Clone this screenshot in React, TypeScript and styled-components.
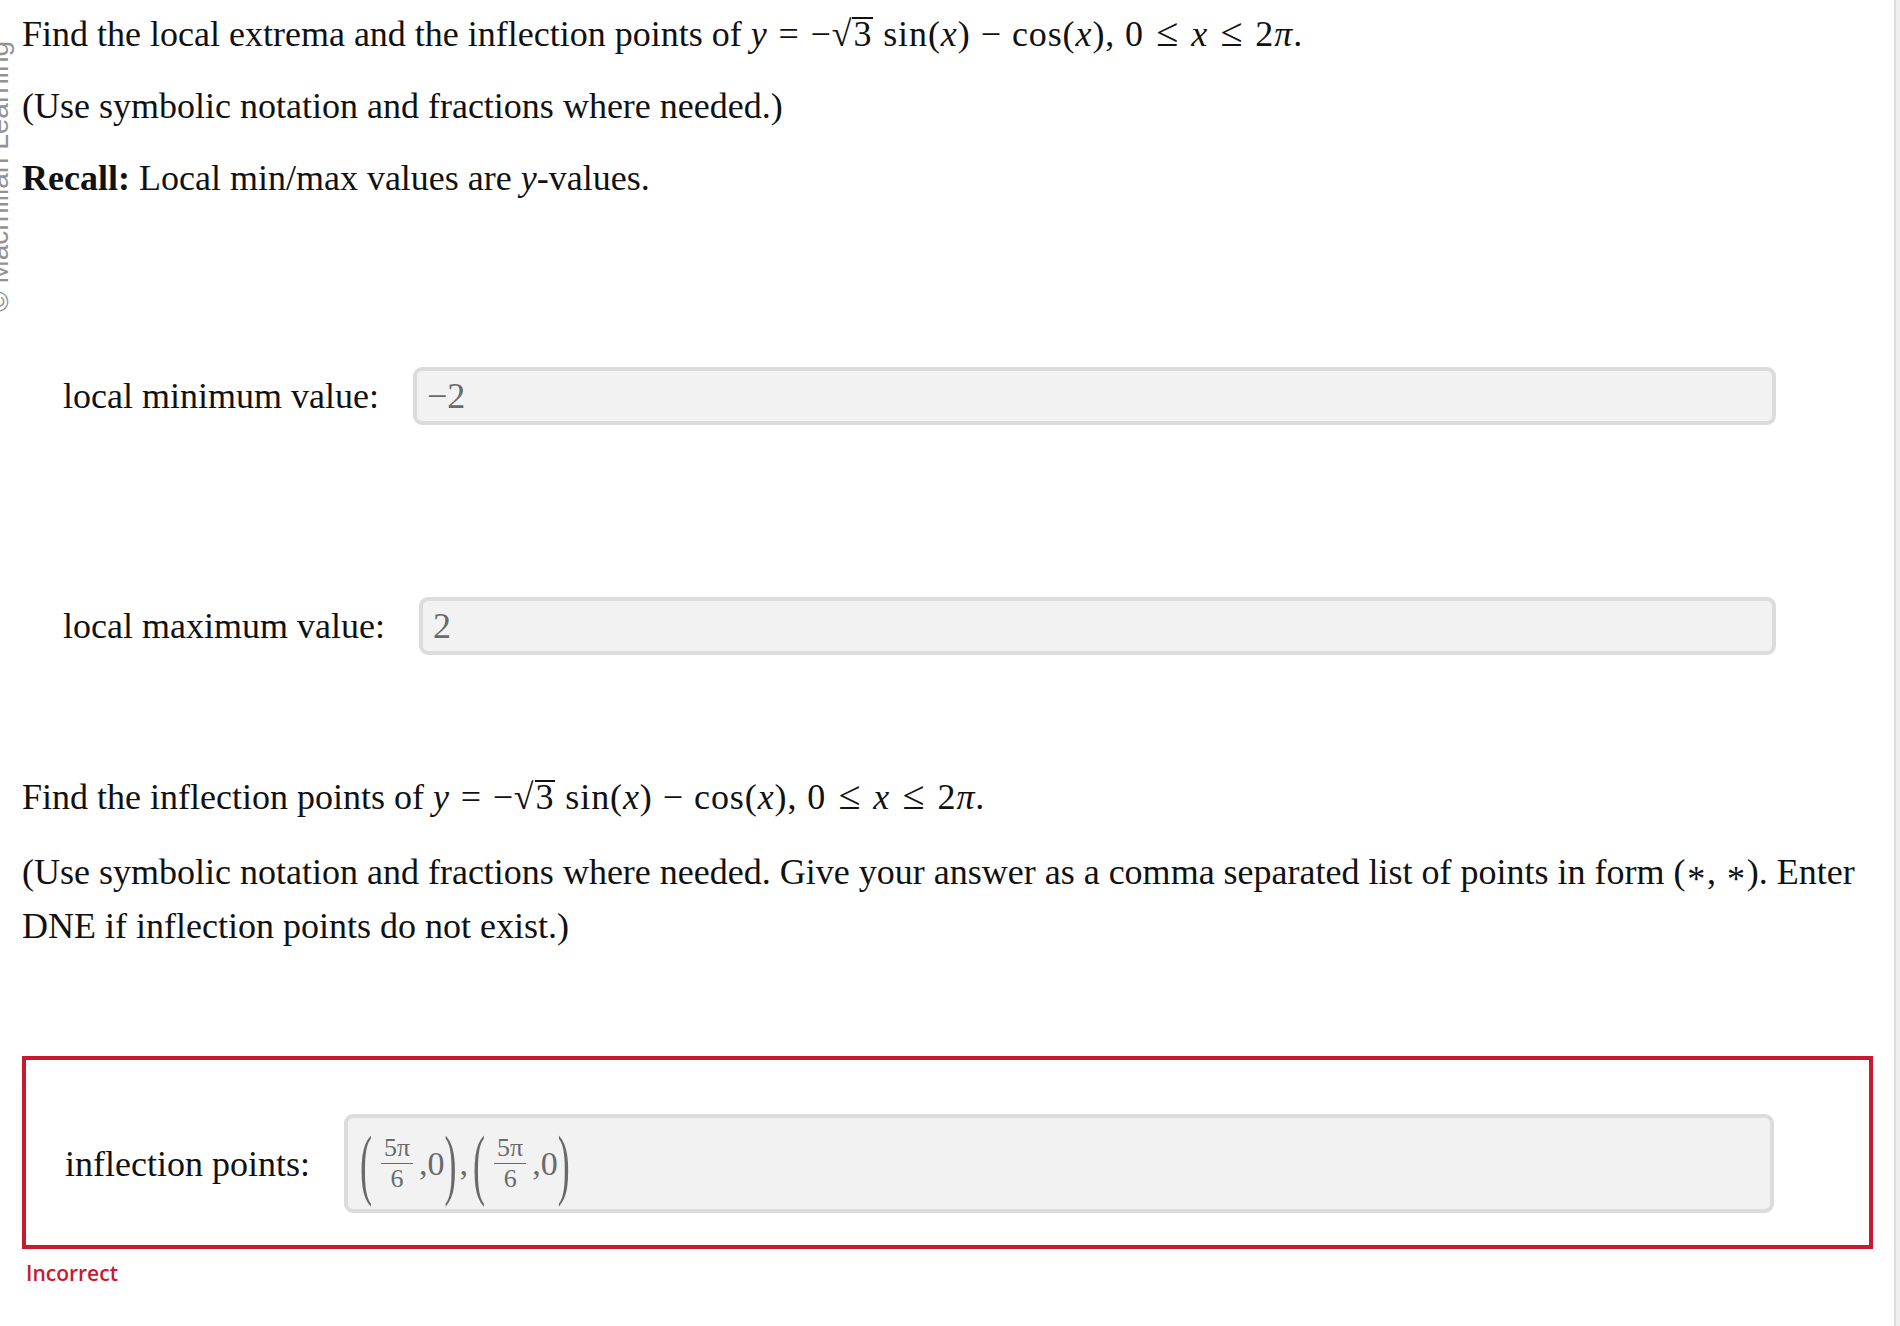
import React from 'react';
import styled, { createGlobalStyle } from 'styled-components';

const GlobalStyle = createGlobalStyle`
  html, body {
    margin: 0;
    padding: 0;
    background: #fff;
  }
  body {
    font-family: "Liberation Serif", "Times New Roman", serif;
  }
`;

const Page = styled.div`
  position: relative;
  display: flex;
  min-height: 100vh;
  overflow: hidden;
`;

const Content = styled.main`
  flex: 1;
  min-width: 0;
  padding: 7px 21px 0 22px;
  font-size: 36px;
  line-height: 54px;
  color: #111;
`;

const ScrollEdge = styled.div`
  flex: none;
  width: 4px;
  border-left: 2px solid #dcdcdc;
  background: #efefef;
`;

const Watermark = styled.div`
  position: absolute;
  left: -15px;
  top: 312px;
  transform: rotate(-90deg);
  transform-origin: 0 0;
  font-family: "Liberation Sans", Arial, sans-serif;
  font-size: 28px;
  line-height: 1;
  color: #929292;
  white-space: nowrap;
`;

const Para = styled.p<{ $mt?: number }>`
  margin: ${p => p.$mt ?? 0}px 0 0;
`;

const Var = styled.i`
  font-style: italic;
`;

const MathLine = styled.span`
  letter-spacing: 0.025em;
`;

const Rel = styled.span<{ $big?: boolean }>`
  display: inline-block;
  margin: 0 0.3em;
  line-height: 0;
  font-size: ${p => (p.$big ? '1.12em' : '1em')};
`;

const Bin = styled.span`
  display: inline-block;
  margin: 0 0.28em;
  line-height: 0;
`;

const Radicand = styled.span`
  display: inline-block;
  line-height: 30px;
  border-top: 2px solid currentColor;
  padding: 0 1px;
`;

const Star = styled.span`
  display: inline-block;
  line-height: 0;
  vertical-align: -0.2em;
  padding: 0 0.05em;
`;

const AnswerRow = styled.div<{ $mt?: number; $left?: number; $right?: number }>`
  display: flex;
  align-items: center;
  gap: 34px;
  margin-top: ${p => p.$mt ?? 0}px;
  padding: 0 ${p => p.$right ?? 97}px 0 ${p => p.$left ?? 41}px;
`;

const Label = styled.span`
  flex: none;
  white-space: nowrap;
`;

const Field = styled.div<{ $tall?: boolean }>`
  flex: 1;
  box-sizing: border-box;
  height: ${p => (p.$tall ? 99 : 58)}px;
  display: flex;
  align-items: center;
  padding: 0 10px;
  border: 4px solid #dcdcdc;
  border-radius: 9px;
  background: #f2f2f2;
  color: #6a6a6a;
`;

const FeedbackBox = styled.div`
  margin-top: 103px;
  border: 4px solid #c8192e;
  padding: 54px 0 32px;
`;

const Verdict = styled.div`
  margin-top: 9px;
  padding-left: 4px;
  font-family: "Open Sans", "Liberation Sans", sans-serif;
  font-weight: 600;
  font-size: 21px;
  line-height: 30px;
  color: #c8192e;
`;

const MathValue = styled.span`
  display: inline-flex;
  align-items: center;
  padding-left: 2px;
  font-size: 34px;
  line-height: 1;
`;

const Delim = styled.span`
  display: inline-block;
  font-size: 36px;
  line-height: 1;
  transform: scaleY(2.2);
`;

const Frac = styled.span`
  display: inline-flex;
  flex-direction: column;
  align-items: center;
  margin: 0 6px 0 9px;
  font-size: 26px;
  line-height: 26px;
`;

const Num = styled.span`
  padding: 0 3px 2px;
  border-bottom: 1.5px solid currentColor;
`;

const Den = styled.span`
  padding-top: 2px;
`;

const Sep = styled.span`
  margin: 0 5px 0 3px;
`;

const Equation = () => (
  <MathLine>
    <Var>y</Var>
    <Rel>=</Rel>−√<Radicand>3</Radicand> sin(<Var>x</Var>)<Bin>−</Bin>cos(<Var>x</Var>), 0
    <Rel $big>≤</Rel>
    <Var>x</Var>
    <Rel $big>≤</Rel>2<Var>π</Var>.
  </MathLine>
);

const Point = () => (
  <>
    <Delim>(</Delim>
    <Frac>
      <Num>5π</Num>
      <Den>6</Den>
    </Frac>
    <span>,0</span>
    <Delim>)</Delim>
  </>
);

export default function App() {
  return (
    <Page>
      <GlobalStyle />
      <Watermark>© Macmillan Learning</Watermark>
      <Content>
        <Para>
          Find the local extrema and the inflection points of <Equation />
        </Para>
        <Para $mt={18}>(Use symbolic notation and fractions where needed.)</Para>
        <Para $mt={18}>
          <b>Recall:</b> Local min/max values are <Var>y</Var>-values.
        </Para>

        <AnswerRow $mt={162}>
          <Label>local minimum value:</Label>
          <Field>−2</Field>
        </AnswerRow>

        <AnswerRow $mt={172}>
          <Label>local maximum value:</Label>
          <Field>2</Field>
        </AnswerRow>

        <Para $mt={115}>
          Find the inflection points of <Equation />
        </Para>
        <Para $mt={21}>
          (Use symbolic notation and fractions where needed. Give your answer as a comma separated list of
          points in form (<Star>*</Star>, <Star>*</Star>). Enter DNE if inflection points do not exist.)
        </Para>

        <FeedbackBox>
          <AnswerRow $left={39} $right={95}>
            <Label>inflection points:</Label>
            <Field $tall>
              <MathValue>
                <Point />
                <Sep>,</Sep>
                <Point />
              </MathValue>
            </Field>
          </AnswerRow>
        </FeedbackBox>
        <Verdict>Incorrect</Verdict>
      </Content>
      <ScrollEdge />
    </Page>
  );
}
